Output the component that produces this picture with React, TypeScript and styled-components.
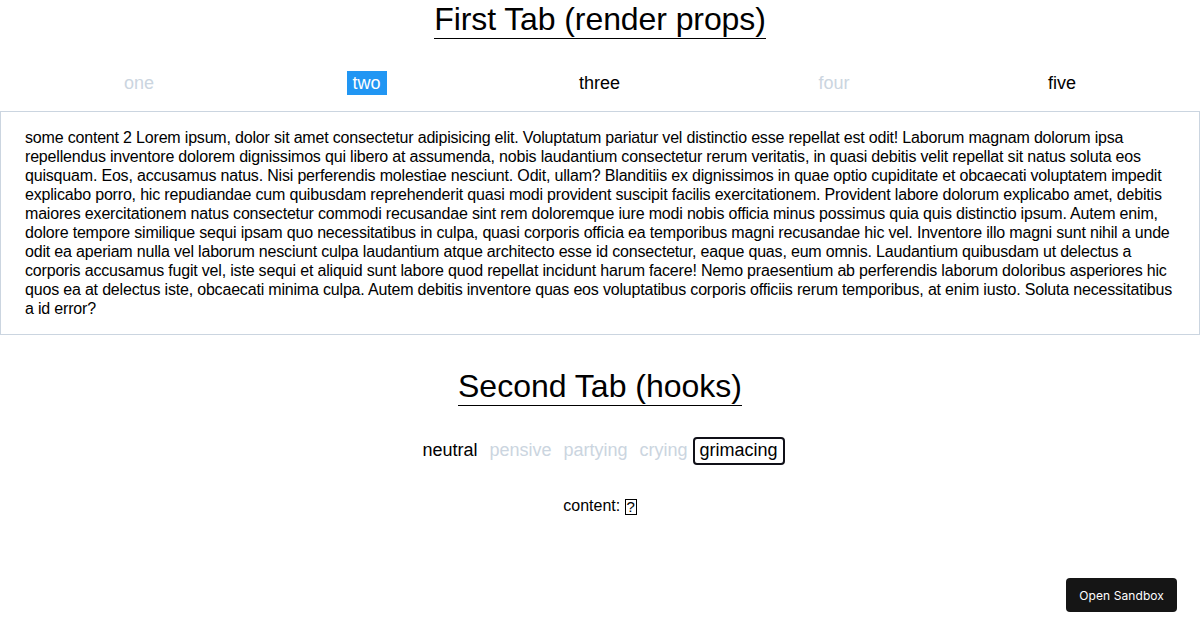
import { useState } from 'react';
import styled, { createGlobalStyle } from 'styled-components';

const GlobalStyle = createGlobalStyle`
  html, body {
    margin: 0;
    padding: 0;
    background: #fff;
    font-family: "Liberation Sans", Arial, sans-serif;
    color: #000;
  }
`;

const firstTabs = [
  { label: 'one', disabled: true },
  { label: 'two' },
  { label: 'three' },
  { label: 'four', disabled: true },
  { label: 'five' },
];

const secondTabs = [
  { label: 'neutral' },
  { label: 'pensive', disabled: true },
  { label: 'partying', disabled: true },
  { label: 'crying', disabled: true },
  { label: 'grimacing' },
];

const LOREM =
  'Lorem ipsum, dolor sit amet consectetur adipisicing elit. Voluptatum pariatur vel distinctio esse repellat est odit! Laborum magnam dolorum ipsa repellendus inventore dolorem dignissimos qui libero at assumenda, nobis laudantium consectetur rerum veritatis, in quasi debitis velit repellat sit natus soluta eos quisquam. Eos, accusamus natus. Nisi perferendis molestiae nesciunt. Odit, ullam? Blanditiis ex dignissimos in quae optio cupiditate et obcaecati voluptatem impedit explicabo porro, hic repudiandae cum quibusdam reprehenderit quasi modi provident suscipit facilis exercitationem. Provident labore dolorum explicabo amet, debitis maiores exercitationem natus consectetur commodi recusandae sint rem doloremque iure modi nobis officia minus possimus quia quis distinctio ipsum. Autem enim, dolore tempore similique sequi ipsam quo necessitatibus in culpa, quasi corporis officia ea temporibus magni recusandae hic vel. Inventore illo magni sunt nihil a unde odit ea aperiam nulla vel laborum nesciunt culpa laudantium atque architecto esse id consectetur, eaque quas, eum omnis. Laudantium quibusdam ut delectus a corporis accusamus fugit vel, iste sequi et aliquid sunt labore quod repellat incidunt harum facere! Nemo praesentium ab perferendis laborum doloribus asperiores hic quos ea at delectus iste, obcaecati minima culpa. Autem debitis inventore quas eos voluptatibus corporis officiis rerum temporibus, at enim iusto. Soluta necessitatibus a id error?';

const App = () => {
  const [first, setFirst] = useState(1);
  const [second, setSecond] = useState(4);

  return (
    <Page>
      <GlobalStyle />
      <Heading $tight>First Tab (render props)</Heading>
      <TabList>
        {firstTabs.map((tab, i) => (
          <FirstTabButton
            key={tab.label}
            type="button"
            disabled={tab.disabled}
            $active={i === first}
            onClick={() => setFirst(i)}
          >
            {tab.label}
          </FirstTabButton>
        ))}
      </TabList>
      <Panel>{`some content ${first + 1} ${LOREM}`}</Panel>

      <SecondSection>
        <Heading>Second Tab (hooks)</Heading>
        <PillList>
          {secondTabs.map((tab, i) => (
            <PillButton
              key={tab.label}
              type="button"
              disabled={tab.disabled}
              $active={i === second}
              onClick={() => setSecond(i)}
            >
              {tab.label}
            </PillButton>
          ))}
        </PillList>
        <Content>
          content: <MissingGlyph>?</MissingGlyph>
        </Content>
      </SecondSection>

      <SandboxLink href="#">Open Sandbox</SandboxLink>
    </Page>
  );
};

const Page = styled.div`
  display: flex;
  flex-direction: column;
  height: 630px;
  overflow: hidden;
`;

const Heading = styled.h1<{ $tight?: boolean }>`
  align-self: center;
  margin: 0;
  padding-top: 1px;
  font-size: 32px;
  font-weight: 400;
  line-height: 37px;
  letter-spacing: ${({ $tight }) => ($tight ? '-0.09px' : '0')};
  border-bottom: 1px solid #000;
`;

const TabList = styled.div`
  display: flex;
  justify-content: space-between;
  margin-top: 32px;
  padding: 0 118px;
  height: 24px;
`;

const FirstTabButton = styled.button<{ $active?: boolean }>`
  border: none;
  padding: 0 6px;
  font: inherit;
  font-size: 18px;
  background: ${({ $active }) => ($active ? '#2196f3' : 'transparent')};
  color: ${({ $active }) => ($active ? '#fff' : '#000')};
  cursor: pointer;

  &:disabled {
    color: #cbd5e0;
    cursor: default;
  }
`;

const Panel = styled.div`
  margin-top: 16px;
  padding: 16px 24px;
  border: 1px solid #cbd5e0;
  font-size: 16px;
  line-height: 19px;
  letter-spacing: -0.185px;
`;

const SecondSection = styled.section`
  display: flex;
  flex-direction: column;
  align-items: center;
  margin-top: 32px;
`;

const PillList = styled.div`
  display: flex;
  align-items: center;
  margin-top: 31px;
`;

const PillButton = styled.button<{ $active?: boolean }>`
  border: none;
  border-radius: 4px;
  padding: 3px 7px 4px;
  margin: 0 -1px;
  font: inherit;
  font-size: 18px;
  background: transparent;
  color: #000;
  cursor: pointer;
  outline: ${({ $active }) => ($active ? '2px solid #101018' : 'none')};
  outline-offset: -2px;

  &:disabled {
    color: #cbd5e0;
    cursor: default;
  }
`;

const Content = styled.p`
  margin: 32px 0 0;
  font-size: 16px;
  line-height: 18px;
`;

const MissingGlyph = styled.span`
  display: inline-block;
  box-sizing: border-box;
  width: 12px;
  height: 16px;
  border: 1px solid #000;
  font-size: 15px;
  line-height: 14px;
  text-align: center;
  vertical-align: -1px;
`;

const SandboxLink = styled.a`
  position: fixed;
  right: 23px;
  bottom: 18px;
  display: flex;
  align-items: center;
  height: 34px;
  padding: 0 13px;
  border-radius: 4px;
  background: #151515;
  color: #fff;
  font-family: Inter, sans-serif;
  font-size: 12px;
  letter-spacing: 0.08px;
  text-decoration: none;
`;

export default App;
